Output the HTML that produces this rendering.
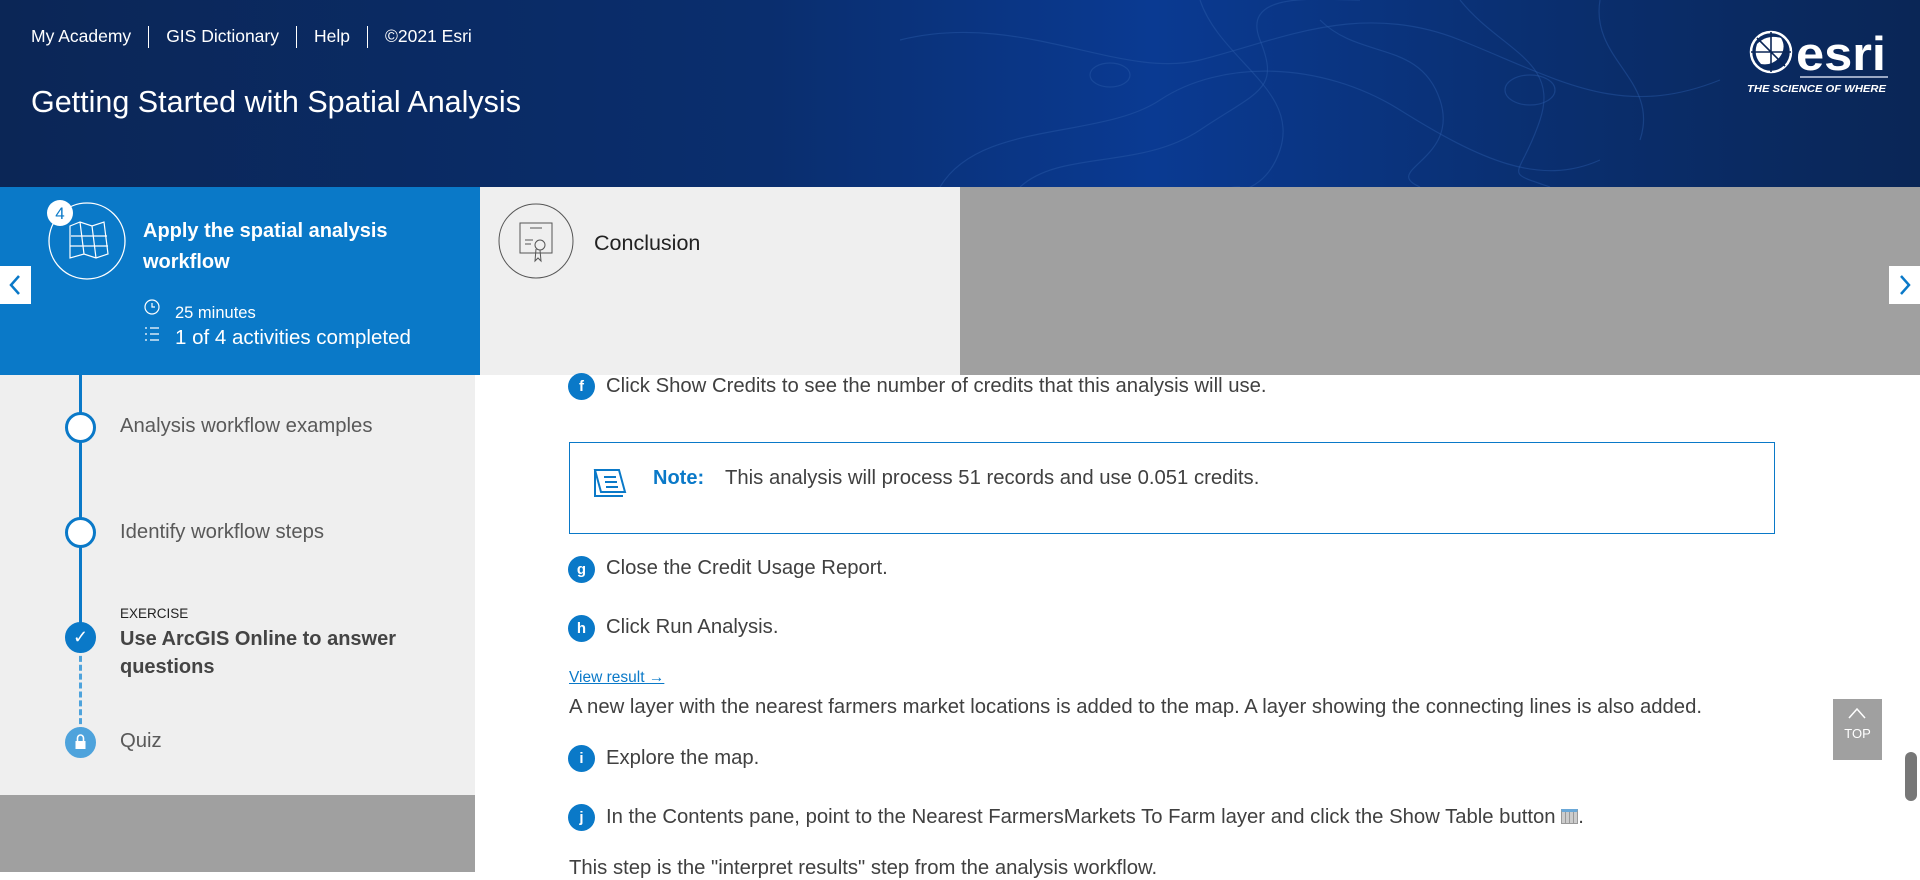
<!DOCTYPE html>
<html><head><meta charset="utf-8"><style>
*{margin:0;padding:0;box-sizing:border-box}
body{width:1920px;height:872px;overflow:hidden;font-family:"Liberation Sans",sans-serif;background:#fff;position:relative;color:#4c4c4c}
.abs{position:absolute}
#hdr{left:0;top:0;width:1920px;height:187px;background:linear-gradient(90deg,#0b2656 0%,#0a2e6e 40%,#0a3a92 60%,#0a2f70 80%,#0a2656 100%);overflow:hidden}
.nav{top:26px;left:31px;color:#fff;font-size:17.5px;white-space:nowrap}
.nav span.sep{display:inline-block;width:1px;height:22px;background:#fff;vertical-align:middle;margin:0 17px}
.ttl{left:31px;top:85px;color:#fff;font-size:30.5px}
.blue{left:0;top:187px;width:480px;height:188px;background:#0a79c8}
.conc{left:480px;top:187px;width:480px;height:188px;background:#efefef}
.grey{left:960px;top:187px;width:960px;height:188px;background:#a0a0a0}
.arr{width:31px;height:38px;background:#fff;top:266px}
.side{left:0;top:375px;width:475px;height:420px;background:#efefef}
.sideg{left:0;top:795px;width:475px;height:77px;background:#a0a0a0}
.dot{width:31px;height:31px;border-radius:50%;border:3px solid #0a79c8;background:#fff;left:65px}
.st{left:120px;font-size:20.3px;color:#595959}
.stp{width:27px;height:27px;border-radius:50%;background:#0a79c8;color:#fff;font-weight:bold;font-size:15px;text-align:center;line-height:27px;left:568px}
.tx{left:606px;font-size:20.3px;color:#404040;white-space:nowrap}
</style></head><body>
<div id="hdr" class="abs">
<svg class="abs" style="left:900px;top:0" width="1020" height="187" fill="none" stroke="#2a5aa8" stroke-opacity=".45" stroke-width="1.2">
<path d="M0 40 C120 10 220 80 300 60 S460 0 560 40 S720 120 820 80"/>
<path d="M40 187 C80 120 200 140 260 100 S420 60 500 110 S640 187 700 160"/>
<path d="M300 0 C320 60 400 90 380 150 S300 187 340 187"/>
<path d="M420 20 C460 60 520 40 540 100 S480 170 520 187"/>
<path d="M560 0 C600 50 660 60 640 120 S600 170 650 187"/>
<path d="M700 0 C690 60 760 80 740 140"/>
<path d="M120 187 C160 150 240 170 300 130 S380 90 360 40 S420 0 460 0"/>
<ellipse cx="210" cy="75" rx="20" ry="12"/>
<ellipse cx="630" cy="90" rx="25" ry="15"/>
</svg>
<div class="abs nav">My Academy<span class="sep"></span>GIS Dictionary<span class="sep"></span>Help<span class="sep"></span>©2021 Esri</div>
<div class="abs ttl">Getting Started with Spatial Analysis</div>
<svg class="abs" style="left:1745px;top:26px" width="150" height="72">
<circle cx="26" cy="26" r="20" fill="none" stroke="#fff" stroke-width="2.5"/>
<path d="M12 18 Q22 8 36 12 Q42 22 34 32 Q26 40 16 38 Q8 30 12 18Z" fill="#fff"/>
<path d="M6 26 H46 M26 6 V46 M12 12 L40 40" stroke="#0b2656" stroke-width="1.6"/>
<text x="51" y="44" fill="#fff" font-size="47" font-weight="bold" font-family="Liberation Sans" textLength="90" lengthAdjust="spacingAndGlyphs">esri</text>
<rect x="55" y="50" width="88" height="2" fill="#9aa8c4"/>
<text x="2" y="66" fill="#fff" font-size="10.5" font-weight="bold" font-style="italic" font-family="Liberation Sans" textLength="139" lengthAdjust="spacingAndGlyphs">THE SCIENCE OF WHERE</text>
</svg>
</div>
<div class="abs blue"></div>
<div class="abs conc"></div>
<div class="abs grey"></div>
<svg class="abs" style="left:40px;top:196px" width="100" height="90">
<circle cx="47" cy="45" r="38" fill="none" stroke="#fff" stroke-width="1.3"/>
<path d="M30 30 L40 26 L52 30 L64 26 L68 58 L56 62 L44 58 L30 62 Z M40 26 L44 58 M52 30 L56 62 M31 40 L67 40 M30 50 L68 50" fill="none" stroke="#fff" stroke-width="1.2"/>
<circle cx="20" cy="17" r="13" fill="#fff"/>
<text x="20" y="23" text-anchor="middle" fill="#0a79c8" font-size="17" font-family="Liberation Sans">4</text>
</svg>
<div class="abs" style="left:143px;top:216px;color:#fff;font-weight:bold;font-size:20px;line-height:31px;width:320px">Apply the spatial analysis workflow</div>
<svg class="abs" style="left:143px;top:298px" width="20" height="46" fill="none" stroke="#fff" stroke-width="1.2"><circle cx="9" cy="9" r="7"/><path d="M9 5 V9 H12"/><path d="M2 30h2M7 30h9M2 36h2M7 36h9M2 42h2M7 42h9"/></svg>
<div class="abs" style="left:175px;top:304px;color:#fff;font-size:16.5px">25 minutes</div>
<div class="abs" style="left:175px;top:326px;color:#fff;font-size:20.5px">1 of 4 activities completed</div>
<svg class="abs" style="left:498px;top:203px" width="78" height="78" fill="none" stroke="#555" stroke-width="1">
<circle cx="38" cy="38" r="37"/>
<rect x="22" y="20" width="32" height="30"/><path d="M32 25h12M27 37h8M27 41h6"/><circle cx="42" cy="42" r="5"/><path d="M38 46 L37 58 L40 55 L43 58 L42 47"/>
</svg>
<div class="abs" style="left:594px;top:231px;font-size:21.5px;color:#222">Conclusion</div>
<div class="abs arr" style="left:0"><svg width="31" height="38"><path d="M19 10 L11 19 L19 28" fill="none" stroke="#0a79c8" stroke-width="2.5"/></svg></div>
<div class="abs arr" style="left:1889px"><svg width="31" height="38"><path d="M12 10 L20 19 L12 28" fill="none" stroke="#0a79c8" stroke-width="2.5"/></svg></div>
<div class="abs side"></div>
<div class="abs sideg"></div>
<div class="abs" style="left:79px;top:375px;width:3px;height:263px;background:#0a79c8"></div>
<div class="abs" style="left:79px;top:638px;width:0;height:104px;border-left:3px dashed #4ea3dc"></div>
<div class="abs dot" style="top:412px"></div>
<div class="abs dot" style="top:517px"></div>
<div class="abs dot" style="top:622px;background:#0a79c8;color:#fff;text-align:center;line-height:25px;font-size:18px">✓</div>
<div class="abs dot" style="top:727px;background:#4ea3dc;border-color:#4ea3dc"><svg width="25" height="25"><rect x="7.5" y="11" width="10" height="8" fill="#fff"/><path d="M9.5 11 V8 a3 3 0 0 1 6 0 V11" fill="none" stroke="#fff" stroke-width="1.6"/></svg></div>
<div class="abs st" style="top:415px">Analysis workflow examples</div>
<div class="abs st" style="top:521px">Identify workflow steps</div>
<div class="abs" style="left:120px;top:606px;font-size:13.5px;color:#222">EXERCISE</div>
<div class="abs" style="left:120px;top:625px;font-size:20px;font-weight:bold;color:#444;line-height:28px">Use ArcGIS Online to answer<br>questions</div>
<div class="abs st" style="top:730px">Quiz</div>

<div class="abs stp" style="top:373px">f</div><div class="abs tx" style="top:375px">Click Show Credits to see the number of credits that this analysis will use.</div>
<div class="abs" style="left:569px;top:442px;width:1206px;height:92px;border:1px solid #0a79c8"></div>
<svg class="abs" style="left:593px;top:466px" width="36" height="32" fill="none" stroke="#0a79c8" stroke-width="2"><path d="M2 4h24l6 22H8z"/><path d="M2 4v26h28"/><path d="M11 11h12M12 16h12M13 21h12"/></svg>
<div class="abs" style="left:653px;top:467px;font-size:20px;font-weight:bold;color:#0a79c8">Note:</div>
<div class="abs tx" style="left:725px;top:467px">This analysis will process 51 records and use 0.051 credits.</div>
<div class="abs stp" style="top:556px">g</div><div class="abs tx" style="top:557px">Close the Credit Usage Report.</div>
<div class="abs stp" style="top:615px">h</div><div class="abs tx" style="top:616px">Click Run Analysis.</div>
<div class="abs" style="left:569px;top:669px;font-size:15.5px;color:#0a79c8;text-decoration:underline">View result →</div>
<div class="abs tx" style="left:569px;top:696px">A new layer with the nearest farmers market locations is added to the map. A layer showing the connecting lines is also added.</div>
<div class="abs stp" style="top:745px">i</div><div class="abs tx" style="top:747px">Explore the map.</div>
<div class="abs stp" style="top:804px">j</div><div class="abs tx" style="top:806px">In the Contents pane, point to the Nearest FarmersMarkets To Farm layer and click the Show Table button <span style="display:inline-block;width:17px;height:15px;border:1px solid #999;background:repeating-linear-gradient(90deg,#ccc 0 3px,#999 3px 4px);vertical-align:-1px;border-top:3px solid #6aa8d8"></span>.</div>
<div class="abs tx" style="left:569px;top:857px">This step is the "interpret results" step from the analysis workflow.</div>
<div class="abs" style="left:1833px;top:699px;width:49px;height:61px;background:#a0a0a0;color:#fff;text-align:center;font-size:13px"><svg width="49" height="24"><path d="M16 19 L24 10 L32 19" fill="none" stroke="#fff" stroke-width="1.5"/></svg><div>TOP</div></div>
<div class="abs" style="left:1905px;top:752px;width:12px;height:49px;border-radius:6px;background:#777"></div>
</body></html>
